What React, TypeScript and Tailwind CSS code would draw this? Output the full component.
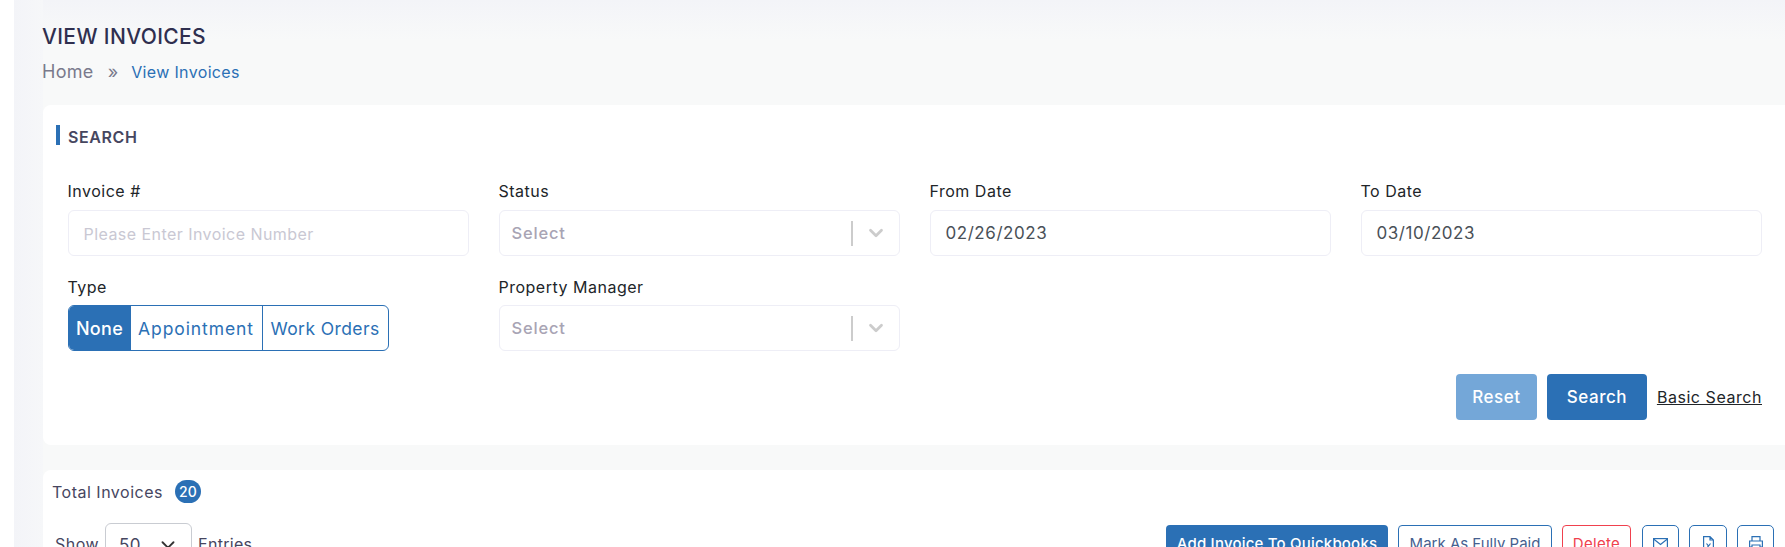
import React from "react";
import { ChevronDown } from "lucide-react";

const font = "font-['Inter','Liberation_Sans',sans-serif]";

function Label({ children }: { children: React.ReactNode }) {
  return <div className="text-[16px] leading-[22px] tracking-[0.5px] text-[#212529]">{children}</div>;
}

function Select() {
  return (
    <div className="flex h-[46px] items-center rounded-md border border-[#eeeef6] bg-white pl-[12px]">
      <span className="flex-1 pt-[1px] text-[16.5px] font-medium tracking-[0.8px] text-[#a8a4b4]">Select</span>
      <span className="h-[25px] w-[2px] bg-[#cccccc]" />
      <span className="flex w-[46px] justify-center text-[#cccccc]">
        <ChevronDown size={22} strokeWidth={3} />
      </span>
    </div>
  );
}

function DateInput({ value }: { value: string }) {
  return (
    <div className="flex h-[46px] items-center rounded-md border border-[#eeeef6] bg-white pl-[15px] pt-[2px] text-[17px] tracking-[0.55px] text-[#495057]">
      {value}
    </div>
  );
}

function IconBtn({ width, top, children }: { width: string; top: string; children: React.ReactNode }) {
  return (
    <button className={"flex h-[38px] items-start justify-center rounded-[5px] border border-[#2b70b5] bg-white text-[#2b70b5] " + width + " " + top}>
      {children}
    </button>
  );
}

export default function App() {
  return (
    <div className={"flex h-[547px] w-[1785px] overflow-hidden bg-white " + font}>
      <div className="w-[14px] shrink-0 bg-white" />
      <main className="relative flex-1 bg-[#f8f9f9]">
        <div className="absolute inset-x-0 top-0 h-[40px] bg-gradient-to-b from-[#f3f4f8] to-[#f8f9f9]" />
        <div className="absolute inset-y-0 left-0 w-[29px] bg-gradient-to-r from-[#f3f4f8] to-[#f6f7f9]" />
        <div className="relative pl-[28px] pt-[22px]">
          <h1 className="pt-[1px] text-[21px] font-medium leading-[28px] tracking-[0.38px] text-[#2f2f4f]">VIEW INVOICES</h1>
          <div className="mt-[9px] flex items-center leading-[24px]">
            <span className="text-[18px] tracking-[0.3px] text-[#7a7a8c]">Home</span>
            <span className="ml-[14px] text-[18px] text-[#7a7a8c]">»</span>
            <span className="ml-[13px] text-[16px] tracking-[0.35px] text-[#2b70b5]">View Invoices</span>
          </div>

          <section className="ml-[1px] mt-[21px] h-[340px] w-[1790px] rounded-lg bg-white">
            <div className="flex h-[40px] items-end">
              <span className="ml-[13px] h-[20px] w-[4px] bg-[#2b70b5]" />
              <span className="-mb-[2px] ml-[8px] text-[16px] font-semibold leading-[20px] tracking-[0.6px] text-[#46465f]">SEARCH</span>
            </div>
            <div className="ml-[24.5px] mt-[35px] grid grid-cols-[401.5px_401.5px_401.5px_401.5px] gap-x-[29.5px]">
              <div>
                <Label>Invoice #</Label>
                <div className="mt-[8px] flex h-[46px] items-center rounded-md border border-[#eeeef6] bg-white pl-[15px] pt-[1px] text-[16px] tracking-[0.45px] text-[#c9c8d3]">
                  Please Enter Invoice Number
                </div>
              </div>
              <div>
                <Label>Status</Label>
                <div className="mt-[8px]"><Select /></div>
              </div>
              <div>
                <Label>From Date</Label>
                <div className="mt-[8px]"><DateInput value="02/26/2023" /></div>
              </div>
              <div>
                <Label>To Date</Label>
                <div className="mt-[8px]"><DateInput value="03/10/2023" /></div>
              </div>
              <div className="mt-[20px]">
                <Label>Type</Label>
                <div className="mt-[7px] flex h-[46px] w-[321px] overflow-hidden rounded-md border border-[#2b70b5] text-[17.5px] text-[#2b70b5]">
                  <span className="flex w-[62px] items-center justify-center bg-[#2b70b5] text-[18px] font-medium tracking-[0.3px] text-white">None</span>
                  <span className="flex w-[132px] items-center justify-center border-r border-[#2b70b5] pt-[2px] tracking-[0.9px]">Appointment</span>
                  <span className="flex flex-1 items-center justify-center pt-[2px] tracking-[0.4px]">Work Orders</span>
                </div>
              </div>
              <div className="mt-[20px]">
                <Label>Property Manager</Label>
                <div className="mt-[7px]"><Select /></div>
              </div>
            </div>
            <div className="mt-[23px] flex h-[46px] w-[1719px] items-center justify-end">
              <button className="h-[46px] w-[81px] rounded-[4px] bg-[#74a7d8] pt-[2px] text-[17px] font-medium tracking-[0.5px] text-white">Reset</button>
              <button className="ml-[10px] h-[46px] w-[100px] rounded-[4px] bg-[#2b70b5] pt-[2px] text-[17px] font-medium tracking-[0.5px] text-white">Search</button>
              <a className="ml-[10px] text-[16px] tracking-[0.55px] text-[#212529] underline">Basic Search</a>
            </div>
          </section>

          <section className="ml-[1px] mt-[25px] h-[120px] w-[1790px] rounded-lg bg-white">
            <div className="flex h-[42px] items-center pl-[9px] text-[16px] tracking-[0.5px] text-[#46465f]">
              <span className="pt-[2px]">Total Invoices</span>
              <span className="ml-[12px] flex h-[23px] w-[26px] items-center justify-center rounded-full bg-[#2b70b5] text-[14px] font-medium tracking-normal text-white">20</span>
            </div>
            <div className="flex h-[60px] w-[1731px] items-start justify-between pt-[11px] text-[16px] text-[#46465f]">
              <div className="flex items-start">
                <span className="ml-[12px] mt-[9px] w-[43px] tracking-[0.5px]">Show</span>
                <div className="ml-[7px] flex h-[40px] w-[87px] items-start rounded-md border border-[#c9ccd2] pl-[13px] pt-[9px] text-[17px] tracking-[0.5px]">
                  <span className="flex-1">50</span>
                  <ChevronDown size={22} className="mr-[12px] mt-[1px] text-[#333]" />
                </div>
                <span className="ml-[6px] mt-[9px] tracking-[0.3px]">Entries</span>
              </div>
              <div className="mt-[2px] flex items-start text-[15px]">
                <button className="h-[38px] w-[222px] rounded-[4px] bg-[#2b70b5] pt-[1px] font-medium tracking-[0.2px] text-white">Add Invoice To Quickbooks</button>
                <button className="ml-[10px] h-[38px] w-[154px] rounded-[4px] border border-[#2b70b5] bg-white pt-[1px] text-[#46608f]">Mark As Fully Paid</button>
                <button className="ml-[10px] h-[38px] w-[69px] rounded-[4px] border border-[#f0414e] bg-white pt-[1px] tracking-[0.3px] text-[#f0414e]">Delete</button>
                <div className="ml-[11px]">
                  <IconBtn width="w-[37px]" top="pt-[12px]">
                    <svg width="15" height="12" viewBox="0 0 15 12" fill="none" stroke="currentColor" strokeWidth="1.2"><rect x="0.6" y="0.6" width="13.8" height="10.8" /><path d="M0.6 1l6.9 5.5L14.4 1" /></svg>
                  </IconBtn>
                </div>
                <div className="ml-[10px]">
                  <IconBtn width="w-[38px]" top="pt-[10px]">
                    <svg width="11" height="15" viewBox="0 0 11 15" fill="none" stroke="currentColor" strokeWidth="1.2"><path d="M0.6 0.6h6.4l3.4 3.4v10.4H0.6zM7 0.6V4h3.4M3.5 7.5l4 5M7.5 7.5l-4 5" /></svg>
                  </IconBtn>
                </div>
                <div className="ml-[10px]">
                  <IconBtn width="w-[37px]" top="pt-[10px]">
                    <svg width="14" height="15" viewBox="0 0 14 15" fill="none" stroke="currentColor" strokeWidth="1.2"><path d="M3 5V0.6h8V5M3 11H0.6V5h12.8v6H11M3 9h8v5.4H3z" /></svg>
                  </IconBtn>
                </div>
              </div>
            </div>
          </section>
        </div>
      </main>
    </div>
  );
}
